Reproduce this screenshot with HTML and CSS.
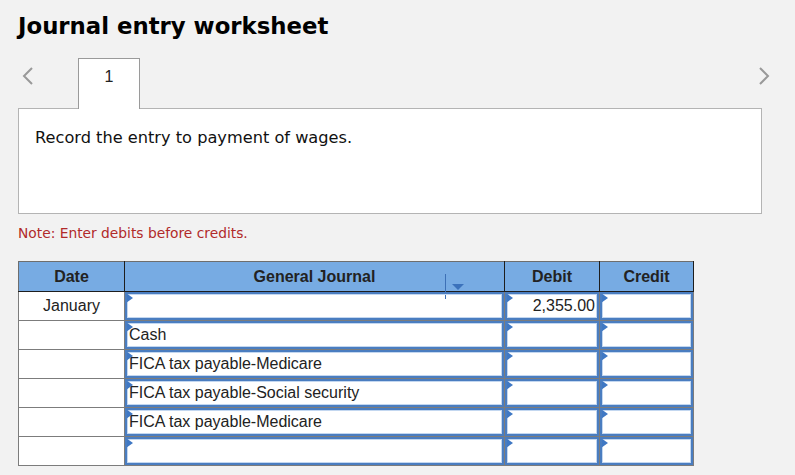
FILE: index.html
```html
<!DOCTYPE html>
<html>
<head>
<meta charset="utf-8">
<link rel="stylesheet" href="styles.css">
</head>
<body>
<h1 class="title">Journal entry worksheet</h1>
<div class="tabs">
  <div class="nav nav-left">
    <svg width="12" height="18" viewBox="0 0 12 18"><polyline points="10,1 2,9 10,17" fill="none" stroke="#999" stroke-width="2"/></svg>
  </div>
  <div class="tab">1</div>
  <div class="spacer"></div>
  <div class="nav nav-right">
    <svg width="12" height="18" viewBox="0 0 12 18"><polyline points="2,1 10,9 2,17" fill="none" stroke="#999" stroke-width="2"/></svg>
  </div>
</div>
<div class="prompt">Record the entry to payment of wages.</div>
<p class="note">Note: Enter debits before credits.</p>
<table class="journal">
  <colgroup>
    <col class="c-date"><col class="c-gj"><col class="c-debit"><col class="c-credit">
  </colgroup>
  <thead>
    <tr>
      <th>Date</th>
      <th class="gj-head">General Journal<span class="resize"></span><span class="caret"></span></th>
      <th>Debit</th>
      <th class="last">Credit</th>
    </tr>
  </thead>
  <tbody>
    <tr>
      <td class="date">January</td>
      <td><div class="inp"></div></td>
      <td><div class="inp num">2,355.00</div></td>
      <td><div class="inp"></div></td>
    </tr>
    <tr>
      <td class="date"></td>
      <td><div class="inp">Cash</div></td>
      <td><div class="inp"></div></td>
      <td><div class="inp"></div></td>
    </tr>
    <tr>
      <td class="date"></td>
      <td><div class="inp">FICA tax payable-Medicare</div></td>
      <td><div class="inp"></div></td>
      <td><div class="inp"></div></td>
    </tr>
    <tr>
      <td class="date"></td>
      <td><div class="inp">FICA tax payable-Social security</div></td>
      <td><div class="inp"></div></td>
      <td><div class="inp"></div></td>
    </tr>
    <tr>
      <td class="date"></td>
      <td><div class="inp">FICA tax payable-Medicare</div></td>
      <td><div class="inp"></div></td>
      <td><div class="inp"></div></td>
    </tr>
    <tr>
      <td class="date"></td>
      <td><div class="inp"></div></td>
      <td><div class="inp"></div></td>
      <td><div class="inp"></div></td>
    </tr>
  </tbody>
</table>
</body>
</html>
```
FILE: styles.css
```css
html, body {
  margin: 0;
  padding: 0;
  background: #f2f2f2;
}
body {
  width: 795px;
  height: 475px;
  overflow: hidden;
  font-family: "DejaVu Sans", Verdana, sans-serif;
  color: #111;
}
.title {
  margin: 13px 0 0 18px;
  font-size: 22.8px;
  line-height: 26px;
  font-weight: bold;
  color: #000;
}
.tabs {
  display: flex;
  align-items: stretch;
  margin-top: 19px;
  padding: 0 25px 0 18px;
  height: 51px;
  position: relative;
  z-index: 1;
}
.nav {
  display: flex;
  align-items: flex-start;
  padding-top: 9px;
}
.nav-left {
  width: 60px;
  padding-left: 4px;
  box-sizing: border-box;
}
.spacer { flex: 1; }
.tab {
  width: 62px;
  box-sizing: border-box;
  background: #fff;
  border: 1px solid #9a9a9a;
  border-bottom: none;
  text-align: center;
  font-family: "Liberation Sans", Arial, sans-serif;
  font-size: 16px;
  line-height: 18px;
  padding-top: 9px;
  color: #222;
}
.prompt {
  margin: -1px 33px 0 18px;
  height: 106px;
  box-sizing: border-box;
  background: #fff;
  border: 1px solid #b4b4b4;
  padding: 20px 16px 0 16px;
  font-size: 16.2px;
  line-height: 18px;
  color: #111;
}
.note {
  margin: 11px 0 0 18px;
  font-size: 13.8px;
  line-height: 16px;
  color: #b12a2a;
}
.journal {
  margin: 20px 0 0 18px;
  border-collapse: collapse;
  table-layout: fixed;
  width: 675px;
  font-family: "Liberation Sans", Arial, sans-serif;
  font-size: 16px;
}
.c-date { width: 106px; }
.c-gj { width: 380px; }
.c-debit { width: 95px; }
.c-credit { width: 94px; }
.journal th {
  background: #77abe3;
  height: 29px;
  padding: 0;
  font-weight: bold;
  color: #222;
  border: 1px solid #1e1e1e;
  border-top-color: #6e6e6e;
  text-align: center;
  vertical-align: middle;
}
.journal th:first-child {
  border-left-color: #6e6e6e;
}
.gj-head { position: relative; }
.resize {
  position: absolute;
  left: 320px;
  top: 12px;
  width: 1px;
  height: 25px;
  background: #3d70b6;
}
.caret {
  position: absolute;
  left: 327px;
  top: 22px;
  width: 0;
  height: 0;
  border-left: 6px solid transparent;
  border-right: 6px solid transparent;
  border-top: 6px solid #3c72bb;
}
.journal td {
  height: 28px;
  padding: 0;
  border: 1px solid #7c7c7c;
  background: #fff;
}
.journal td.date {
  text-align: center;
  color: #222;
}
.inp {
  position: relative;
  height: 28px;
  box-sizing: border-box;
  border: 2px solid #4a7dc0;
  box-shadow: inset 0 0 0 1px #c3d7f0;
  padding: 0 2px;
  line-height: 24px;
  color: #222;
  white-space: nowrap;
  overflow: hidden;
}
.inp::before {
  content: "";
  position: absolute;
  left: -1px;
  top: -1px;
  width: 0;
  height: 0;
  border-top: 5px solid transparent;
  border-bottom: 5px solid transparent;
  border-left: 7px solid #3f78c4;
}
.inp.num {
  text-align: right;
  padding-right: 2px;
}
```
